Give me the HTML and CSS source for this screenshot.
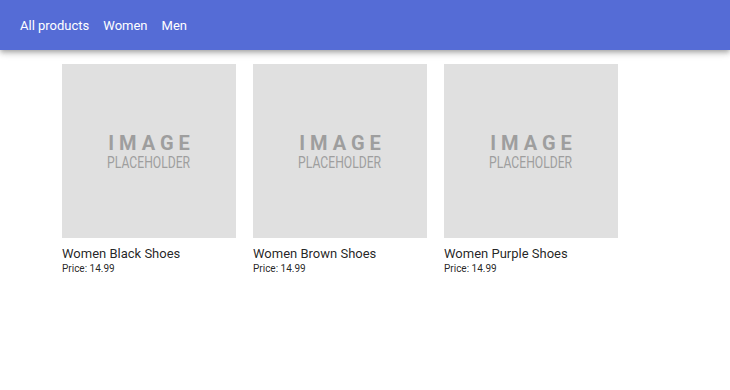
FILE: index.html
```html
<!DOCTYPE html>
<html lang="en">
<head>
    <meta charset="UTF-8">
    <meta name="viewport" content="width=device-width, initial-scale=1.0">
    <title>Shop</title>
    <link rel="stylesheet" href="styles.css">
</head>
<body>
    <header class="app-bar">
        <nav class="nav">
            <a href="#">All products</a>
            <a href="#">Women</a>
            <a href="#">Men</a>
        </nav>
    </header>

    <main class="products">
        <div class="product">
            <div class="placeholder">
                <span class="ph-big">IMAGE</span>
                <span class="ph-small">PLACEHOLDER</span>
            </div>
            <div class="product-name">Women Black Shoes</div>
            <div class="product-price">Price: 14.99</div>
        </div>
        <div class="product">
            <div class="placeholder">
                <span class="ph-big">IMAGE</span>
                <span class="ph-small">PLACEHOLDER</span>
            </div>
            <div class="product-name">Women Brown Shoes</div>
            <div class="product-price">Price: 14.99</div>
        </div>
        <div class="product">
            <div class="placeholder">
                <span class="ph-big">IMAGE</span>
                <span class="ph-small">PLACEHOLDER</span>
            </div>
            <div class="product-name">Women Purple Shoes</div>
            <div class="product-price">Price: 14.99</div>
        </div>
    </main>
</body>
</html>
```

FILE: styles.css
```css
* {
    margin: 0;
    padding: 0;
    box-sizing: border-box;
}

body {
    font-family: Roboto, 'Liberation Sans', sans-serif;
    color: rgba(0, 0, 0, 0.87);
    background: #fff;
}

.app-bar {
    height: 50px;
    background-color: #556cd6;
    box-shadow: 0 2px 4px -1px rgba(0, 0, 0, 0.2), 0 4px 5px 0 rgba(0, 0, 0, 0.14), 0 1px 10px 0 rgba(0, 0, 0, 0.12);
    display: flex;
    align-items: center;
    padding: 0 20px;
}

.nav {
    display: flex;
    gap: 14px;
}

.nav a {
    color: #fff;
    text-decoration: none;
    font-size: 13px;
}

.products {
    display: flex;
    gap: 17px;
    padding: 14px 0 0 62px;
}

.product {
    width: 174px;
}

.placeholder {
    width: 174px;
    height: 174px;
    background-color: #e0e0e0;
    color: #9e9e9e;
    display: flex;
    flex-direction: column;
    align-items: center;
    justify-content: center;
    padding-top: 2px;
}

.ph-big {
    font-weight: bold;
    font-size: 20px;
    letter-spacing: 5px;
    margin-right: -5px;
    line-height: 18px;
}

.ph-small {
    margin-top: 3px;
    font-size: 16px;
    line-height: 16px;
    transform: scaleX(0.76);
}

.product-name {
    margin-top: 8px;
    font-size: 13px;
    line-height: 16px;
}

.product-price {
    font-size: 10px;
    line-height: 13px;
}
```
